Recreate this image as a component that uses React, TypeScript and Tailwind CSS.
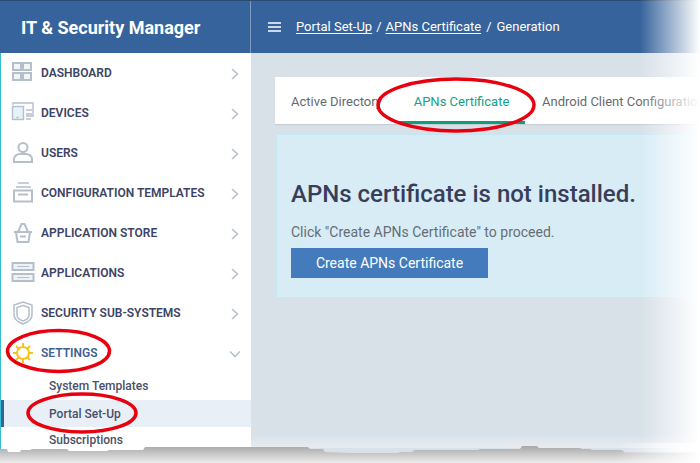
import React from "react";

const G = "#b4bfcb";

const icons: Record<string, React.ReactNode> = {
  dashboard: (
    <g fill="#f1f5f5" stroke={G} strokeWidth="2">
      <rect x="2" y="2" width="8" height="7" />
      <rect x="12" y="2" width="8" height="7" />
      <rect x="2" y="12" width="8" height="7" />
      <rect x="12" y="12" width="8" height="7" />
    </g>
  ),
  devices: (
    <g fill="none" stroke={G} strokeWidth="1.4">
      <path d="M2 4V2h20v13h-7" />
      <rect x="1.500" y="5.500" width="11" height="13" fill="#e6f1f8" />
      <path d="M15 9h6M15 13h6M15 18h5M5.500 16.500h2" />
    </g>
  ),
  users: (
    <g fill="none" stroke={G} strokeWidth="2">
      <circle cx="12" cy="6.500" r="4.500" />
      <path d="M3 21v-3c0-3 3-5 6-5h6c3 0 6 2 6 5v3z" />
    </g>
  ),
  templates: (
    <g fill="none" stroke={G} strokeWidth="2">
      <path d="M7 2h11M5 6h15" strokeWidth="1.600" />
      <rect x="3" y="9.500" width="18" height="11" />
      <path d="M7 13.500h10" />
    </g>
  ),
  store: (
    <g fill="none" stroke={G} strokeWidth="2">
      <path d="M3 11h18M5 11l1.500 10h11L19 11M7 11l3.500-8h3L17 11M9 15.500h6" />
    </g>
  ),
  apps: (
    <g fill="#eef2f5" stroke={G} strokeWidth="2">
      <rect x="1.500" y="2" width="21" height="7" />
      <rect x="1.500" y="13" width="21" height="7" />
      <path d="M6 5.500h12M6 16.500h12" strokeWidth="1.200" />
    </g>
  ),
  shield: (
    <g fill="none" stroke={G}>
      <path d="M12 1l9 3v10c0 5-5 7.500-9 9-4-1.500-9-4-9-9V4z" strokeWidth="1.500" />
      <path d="M12 4.500l6 2v7.500c0 3-3 5-6 6-3-1-6-3-6-6V6.500z" strokeWidth="1.500" />
    </g>
  ),
  settings: (
    <g fill="none" stroke="#f5c31c" strokeWidth="2">
      <circle cx="12" cy="12" r="6" />
      <path d="M12 2v4M12 18v4M2 12h4M18 12h4M5 5l3 3M16 16l3 3M19 5l-3 3M8 16l-3 3" />
    </g>
  ),
};

const items = [
  { key: "dashboard", label: "DASHBOARD" },
  { key: "devices", label: "DEVICES" },
  { key: "users", label: "USERS" },
  { key: "templates", label: "CONFIGURATION TEMPLATES" },
  { key: "store", label: "APPLICATION STORE" },
  { key: "apps", label: "APPLICATIONS" },
  { key: "shield", label: "SECURITY SUB-SYSTEMS" },
];

function Row({ k, label, open }: { k: string; label: string; open?: boolean }) {
  return (
    <div className="flex h-10 items-center pl-[10px] pr-[10px]">
      <svg width="24" height="24" viewBox="0 0 24 24" className="shrink-0">
        {icons[k]}
      </svg>
      <span className={`ml-[6px] flex-1 text-[12px] font-semibold ${open ? "text-[#3f5f94]" : "text-[#3d4364]"}`}>
        {label}
      </span>
      <svg width="12" height="14" viewBox="0 0 12 14" className="mt-[2px] shrink-0">
        <path
          d={open ? "M1 4.500l5 5 5-5" : "M3 2l5.500 5L3 12"}
          fill="none"
          stroke="#b4bfcb"
          strokeWidth="1.500"
        />
      </svg>
    </div>
  );
}

export default function App() {
  return (
    <div
      className="relative flex h-[463px] w-[700px] flex-col overflow-hidden bg-[#d8e0e8]"
      style={{ fontFamily: "Roboto, sans-serif" }}
    >
      <header className="flex h-[53px] shrink-0 border-t border-[#2c4d73] bg-[#36639b] text-white">
        <div className="flex w-[251px] shrink-0 items-center border-r border-[#7d9cc0] pl-[21px] text-[18px] font-bold">
          IT &amp; Security Manager
        </div>
        <div className="flex items-center pl-[17px] text-[13px]">
          <svg width="13" height="10" viewBox="0 0 13 10" className="mr-[15px]">
            <path d="M0 1h13M0 5h13M0 9h13" stroke="#fff" strokeWidth="1.700" />
          </svg>
          <span className="underline underline-offset-2">Portal Set-Up</span>
          <span className="mx-[4px]">/</span>
          <span className="underline underline-offset-2">APNs Certificate</span>
          <span className="mx-[5px]">/</span>
          <span>Generation</span>
        </div>
      </header>

      <div className="flex min-h-0 flex-1">
        <aside className="w-[251px] shrink-0 border-l border-[#36bfd3] bg-white">
          {items.map((i) => (
            <Row key={i.key} k={i.key} label={i.label} />
          ))}
          <Row k="settings" label="SETTINGS" open />
          <div className="-mt-px text-[12px] font-medium text-[#4a5068]">
            <div className="flex h-[28px] items-center pb-px pl-[48px]">System Templates</div>
            <div className="flex h-[27px] items-center border-l-[3px] border-[#36639b] bg-[#e9eff6] pl-[45px]">
              Portal Set-Up
            </div>
            <div className="flex h-[26px] items-center pl-[48px]">Subscriptions</div>
          </div>
        </aside>

        <main className="min-w-0 flex-1 pl-[24px] pt-[24px]">
          <nav className="flex h-[47px] w-[500px] overflow-hidden bg-white text-[13px] text-[#666a70] shadow-[0_1px_1px_rgba(0,0,0,0.08)]">
            <div className="w-[123px] shrink-0 overflow-hidden whitespace-nowrap pl-[16px] pt-[15px]">
              Active Directory
            </div>
            <div className="flex h-full w-[127px] shrink-0 justify-center border-b-[3px] border-[#0f9d80] pt-[15px] text-[#15a088]">
              APNs Certificate
            </div>
            <div className="whitespace-nowrap pl-[17px] pt-[15px]">Android Client Configuration</div>
          </nav>
          <section className="ml-px mt-[10px] h-[164px] w-[500px] border border-[#c4e8f1] bg-[#d8ecf6] pl-[14px] pt-[44px]">
            <h1 className="text-[24px] font-medium leading-[30px] text-[#383d59]">
              APNs certificate is not installed.
            </h1>
            <p className="mt-[13px] text-[14px] leading-[20px] text-[#666c74]">
              Click "Create APNs Certificate" to proceed.
            </p>
            <button className="mt-[6px] h-[30px] w-[197px] bg-[#437bbd] text-[14px] text-white">
              Create APNs Certificate
            </button>
          </section>
        </main>
      </div>

      {/* glow on the page just above the torn edge */}
      <div className="pointer-events-none absolute bottom-[15px] left-[251px] right-0 h-[14px] bg-gradient-to-b from-white/0 to-white/40" />

      {/* fade on the torn right edge */}
      <div className="pointer-events-none absolute inset-y-0 right-0 w-[60px] bg-gradient-to-r from-white/0 via-white/50 to-white" />

      {/* torn bottom edge with its shadow */}
      <svg className="pointer-events-none absolute bottom-0 left-0" width="700" height="20" viewBox="0 0 700 20">
        <defs>
          <linearGradient id="tear" x1="0" y1="0" x2="0" y2="1">
            <stop offset="0" stopColor="#a8a8a8" />
            <stop offset="1" stopColor="#ececec" />
          </linearGradient>
          <linearGradient id="fadeR" x1="0" y1="0" x2="1" y2="0">
            <stop offset="0.88" stopColor="#fff" stopOpacity="0" />
            <stop offset="1" stopColor="#fff" stopOpacity="1" />
          </linearGradient>
        </defs>
        <path
          d="M0 6H7L8 9H20L21 7H30L32 6H67L69 8H107L109 7H143L145 4H308L310 6H323L325 9L350 10H398L400 9H412L414 7H478L480 6H520L522 3H537L539 5H580L582 6H590L592 7H622L625 9.500H700V20H0Z"
          fill="url(#tear)"
        />
        <rect width="700" height="20" fill="url(#fadeR)" />
      </svg>

      {/* red hand-drawn marks */}
      <svg className="pointer-events-none absolute left-0 top-0" width="700" height="463" viewBox="0 0 700 463">
        <g fill="none" stroke="#e8000f" strokeWidth="3.500">
          <ellipse cx="456" cy="105" rx="78" ry="26" />
          <ellipse cx="58.500" cy="351" rx="51" ry="20.500" />
          <ellipse cx="82" cy="413" rx="54" ry="19" />
        </g>
      </svg>
    </div>
  );
}
